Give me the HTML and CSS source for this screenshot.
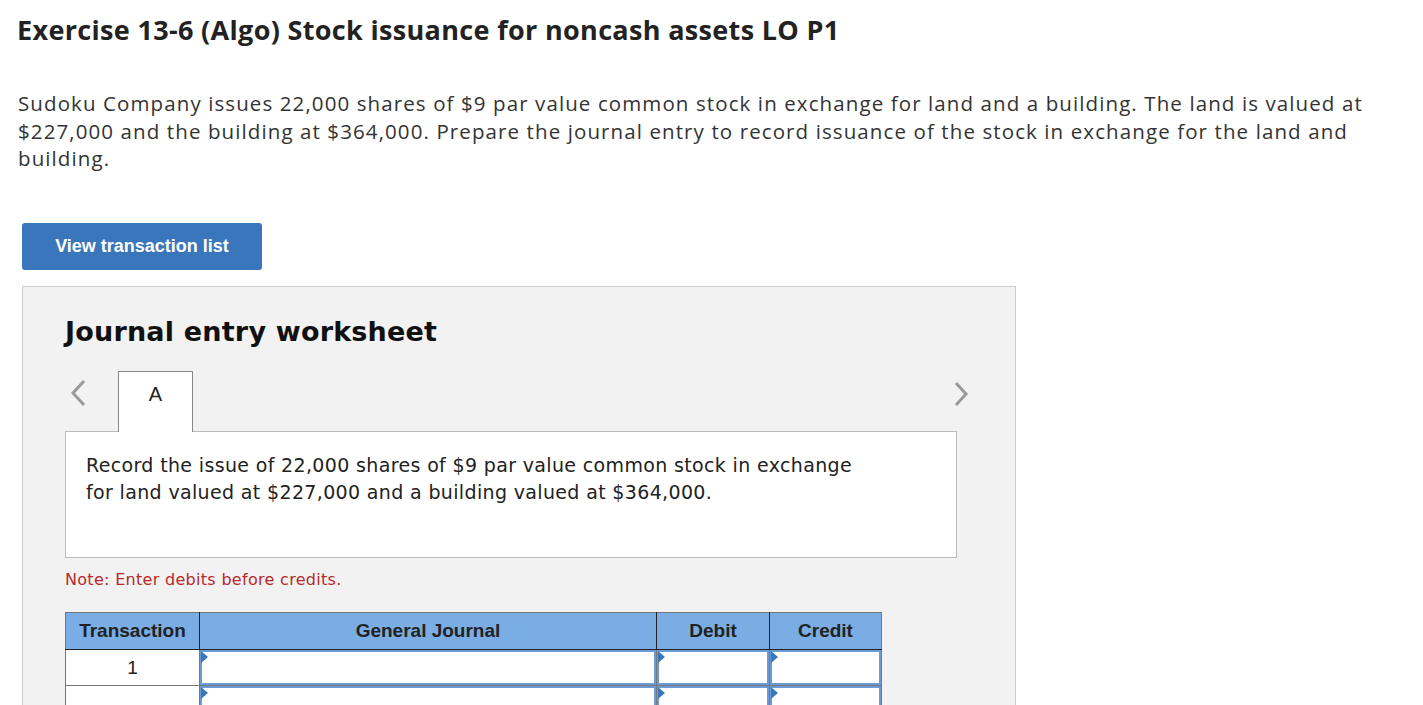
FILE: index.html
```html
<!DOCTYPE html>
<html>
<head>
<meta charset="utf-8">
<link rel="stylesheet" href="styles.css">
</head>
<body>
<div class="page">
  <h1 class="title">Exercise 13-6 (Algo) Stock issuance for noncash assets LO P1</h1>
  <p class="intro">Sudoku Company issues 22,000 shares of $9 par value common stock in exchange for land and a building. The land is valued at $227,000 and the building at $364,000. Prepare the journal entry to record issuance of the stock in exchange for the land and building.</p>
  <button class="btn">View transaction list</button>
  <div class="panel">
    <h2 class="ws-title">Journal entry worksheet</h2>
    <div class="tabs">
      <span class="chev chev-left"><svg width="18" height="28" viewBox="0 0 18 28"><path d="M15 2 L4 14 L15 26" fill="none" stroke="#9a9a9a" stroke-width="3"/></svg></span>
      <div class="tab">A</div>
      <span class="chev chev-right"><svg width="18" height="28" viewBox="0 0 18 28"><path d="M3 4 L13 15 L3 26" fill="none" stroke="#9a9a9a" stroke-width="3"/></svg></span>
    </div>
    <div class="desc">Record the issue of 22,000 shares of $9 par value common stock in exchange<br>for land valued at $227,000 and a building valued at $364,000.</div>
    <p class="note">Note: Enter debits before credits.</p>
    <table class="journal">
      <thead>
        <tr>
          <th class="c-tr">Transaction</th>
          <th class="c-gj">General Journal</th>
          <th class="c-dr">Debit</th>
          <th class="c-cr">Credit</th>
        </tr>
      </thead>
      <tbody>
        <tr>
          <td class="num">1</td>
          <td class="in"><div class="field"></div></td>
          <td class="in"><div class="field"></div></td>
          <td class="in"><div class="field"></div></td>
        </tr>
        <tr>
          <td class="num"></td>
          <td class="in"><div class="field"></div></td>
          <td class="in"><div class="field"></div></td>
          <td class="in"><div class="field"></div></td>
        </tr>
      </tbody>
    </table>
  </div>
</div>
</body>
</html>
```

FILE: styles.css
```css
html, body {
  margin: 0;
  padding: 0;
  background: #ffffff;
}
.page {
  padding: 14px 40px 0 17px;
  font-family: "Open Sans", "Lato", sans-serif;
  color: #222222;
}
.title {
  margin: 0;
  font-size: 27px;
  letter-spacing: 0.33px;
  line-height: 31px;
  font-weight: 700;
  color: #222222;
}
.intro {
  margin: 45px 0 0 1px;
  font-size: 20.5px;
  letter-spacing: 1.1px;
  line-height: 27.5px;
  color: #333333;
}
.btn {
  display: block;
  margin: 50.5px 0 0 5px;
  width: 240px;
  height: 47px;
  border: none;
  border-radius: 3px;
  background: #3a76bb;
  color: #ffffff;
  font-family: "Liberation Sans", Arial, sans-serif;
  font-weight: 700;
  font-size: 18px;
}
.panel {
  margin: 16px 0 0 5px;
  width: 950px;
  height: 420px;
  padding: 0 0 0 42px;
  background: #f2f2f2;
  border: 1px solid #cccccc;
}
.ws-title {
  margin: 28px 0 0 0;
  font-family: "DejaVu Sans", Verdana, sans-serif;
  font-size: 27px;
  letter-spacing: 0.2px;
  line-height: 34px;
  font-weight: 700;
  color: #111111;
}
.tabs {
  position: relative;
  margin-top: 22px;
  height: 60px;
  width: 892px;
  display: flex;
  align-items: flex-start;
  padding-left: 53px;
  box-sizing: border-box;
}
.tab {
  width: 75px;
  height: 61px;
  box-sizing: border-box;
  border: 1px solid #888888;
  border-bottom: none;
  background: #ffffff;
  text-align: center;
  font-family: "Liberation Sans", Arial, sans-serif;
  font-size: 20px;
  line-height: 44px;
  color: #222222;
  position: relative;
  z-index: 2;
}
.chev {
  position: absolute;
  top: 8px;
}
.chev-left { left: 4px; }
.chev-right { left: 888px; top: 8px; }
.desc {
  width: 892px;
  height: 127px;
  box-sizing: border-box;
  background: #ffffff;
  border: 1px solid #bbbbbb;
  padding: 20px 0 0 20px;
  font-family: "DejaVu Sans", Verdana, sans-serif;
  font-size: 19px;
  letter-spacing: 0.35px;
  line-height: 27px;
  color: #222222;
}
.note {
  margin: 12px 0 0 0;
  font-family: "DejaVu Sans", Verdana, sans-serif;
  font-size: 16px;
  letter-spacing: 0.3px;
  line-height: 20px;
  color: #b52a2a;
}
.journal {
  margin-top: 22px;
  border-collapse: collapse;
  border: 1px solid #777777;
  font-family: "Liberation Sans", Arial, sans-serif;
  table-layout: fixed;
  width: 812px;
}
.journal th {
  background: #7aade3;
  height: 36px;
  padding: 0;
  font-size: 19px;
  font-weight: 700;
  color: #222222;
  border-right: 1px solid #222222;
  border-bottom: 1px solid #222222;
  border-top: 1px solid #777777;
}
.journal th:last-child { border-right: 1px solid #777777; }
.c-tr { width: 133px; }
.c-gj { width: 456px; }
.c-dr { width: 112px; }
.c-cr { width: 111px; }
.journal td {
  height: 35px;
  padding: 0;
  border: 1px solid #777777;
  background: #ffffff;
}
.journal td.num {
  text-align: center;
  font-size: 19px;
  color: #222222;
}
.journal td.in {
  position: relative;
}
.field {
  position: absolute;
  inset: 0;
  border: 2px solid #6b9bd6;
  background: #ffffff;
}
.field::before {
  content: "";
  position: absolute;
  left: -1px;
  top: -1px;
  border-left: 7px solid #3a76bb;
  border-top: 6px solid transparent;
  border-bottom: 6px solid transparent;
}
```
